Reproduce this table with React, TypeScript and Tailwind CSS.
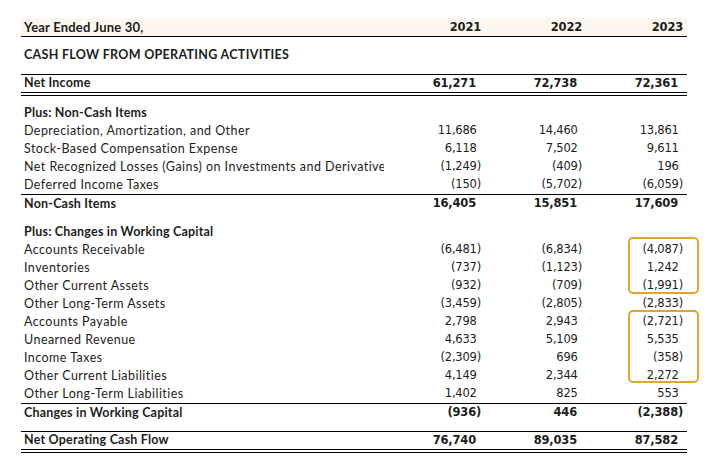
type Row = { label: string; values: number[]; kind: 'item' | 'total' | 'section' };

const nonCash: Row[] = [
  { label: 'Depreciation, Amortization, and Other', values: [11686, 14460, 13861], kind: 'item' },
  { label: 'Stock-Based Compensation Expense', values: [6118, 7502, 9611], kind: 'item' },
  { label: 'Net Recognized Losses (Gains) on Investments and Derivatives', values: [-1249, -409, 196], kind: 'item' },
  { label: 'Deferred Income Taxes', values: [-150, -5702, -6059], kind: 'item' },
];

const workingCapital: Row[] = [
  { label: 'Accounts Receivable', values: [-6481, -6834, -4087], kind: 'item' },
  { label: 'Inventories', values: [-737, -1123, 1242], kind: 'item' },
  { label: 'Other Current Assets', values: [-932, -709, -1991], kind: 'item' },
  { label: 'Other Long-Term Assets', values: [-3459, -2805, -2833], kind: 'item' },
  { label: 'Accounts Payable', values: [2798, 2943, -2721], kind: 'item' },
  { label: 'Unearned Revenue', values: [4633, 5109, 5535], kind: 'item' },
  { label: 'Income Taxes', values: [-2309, 696, -358], kind: 'item' },
  { label: 'Other Current Liabilities', values: [4149, 2344, 2272], kind: 'item' },
  { label: 'Other Long-Term Liabilities', values: [1402, 825, 553], kind: 'item' },
];

const grid = 'grid grid-cols-[1fr_97px_101px_101px] items-center';
const labelFont = "font-['Lato',sans-serif]";
const numFont = "font-['DejaVu_Sans',sans-serif] text-[11.5px] tracking-[-0.2px]";

function Num({ v, bold }: { v: number; bold?: boolean }) {
  const s = Math.abs(v).toLocaleString('en-US');
  return (
    <div className={`${numFont} text-right ${bold ? 'font-bold' : ''}`}>
      {v < 0 ? `(${s})` : s}
      {v >= 0 && <span className="invisible">)</span>}
    </div>
  );
}

function Line({ row, className = '' }: { row: Row; className?: string }) {
  const bold = row.kind === 'total';
  return (
    <div className={`${grid} h-[18px] ${className}`}>
      <div
        className={`${labelFont} pl-[3px] text-[12.5px] overflow-hidden whitespace-nowrap ${
          bold ? 'font-bold tracking-[0.2px]' : 'tracking-[0.45px]'
        }`}
      >
        {row.label}
      </div>
      {row.values.map((v, i) => (
        <Num key={i} v={v} bold={bold} />
      ))}
    </div>
  );
}

function Heading({ text, className = '' }: { text: string; className?: string }) {
  return (
    <div
      className={`${labelFont} h-[18px] flex items-center pl-[3px] text-[12.5px] font-bold tracking-[0.2px] ${className}`}
    >
      {text}
    </div>
  );
}

export default function App() {
  return (
    <div className="w-[708px] h-[459px] bg-white text-[#1c1c1c] pt-[18px] pl-[21px]">
      <div className="relative w-[666px] pr-[4px]">
        {/* header */}
        <div className={`${grid} h-[19px] bg-[#fdf6ee] border-b border-black -mr-[4px] pr-[4px]`}>
          <div className={`${labelFont} pl-[3px] text-[13px] font-bold tracking-[0.2px]`}>Year Ended June 30,</div>
          {['2021', '2022', '2023'].map((y) => (
            <div key={y} className={`${numFont} text-right font-bold`}>
              {y}
            </div>
          ))}
        </div>

        <div className="h-[38px] flex items-center border-b border-black -mr-[4px]">
          <span className={`${labelFont} pl-[3px] text-[12.5px] font-bold tracking-[0.3px]`}>
            CASH FLOW FROM OPERATING ACTIVITIES
          </span>
        </div>

        <Line
          row={{ label: 'Net Income', values: [61271, 72738, 72361], kind: 'total' }}
          className="h-[21px] border-b-4 border-double border-black -mr-[4px] pr-[4px]"
        />

        <Heading text="Plus: Non-Cash Items" className="mt-[8px]" />
        {nonCash.map((r) => (
          <Line key={r.label} row={r} />
        ))}
        <Line
          row={{ label: 'Non-Cash Items', values: [16405, 15851, 17609], kind: 'total' }}
          className="h-[19px] border-t border-black -mr-[4px] pr-[4px]"
        />

        <Heading text="Plus: Changes in Working Capital" className="mt-[10px]" />
        {workingCapital.map((r) => (
          <Line key={r.label} row={r} />
        ))}
        <Line
          row={{ label: 'Changes in Working Capital', values: [-936, 446, -2388], kind: 'total' }}
          className="h-[19px] border-t border-black -mr-[4px] pr-[4px]"
        />

        <Line
          row={{ label: 'Net Operating Cash Flow', values: [76740, 89035, 87582], kind: 'total' }}
          className="mt-[9px] h-[22px] border-t border-b-4 border-double border-black -mr-[4px] pr-[4px]"
        />

        {/* highlight boxes */}
        <div className="absolute left-[607px] top-[219px] w-[71px] h-[57px] rounded-[5px] border-2 border-[#e0a62c]" />
        <div className="absolute left-[607px] top-[292px] w-[71px] h-[73px] rounded-[5px] border-2 border-[#e0a62c]" />
      </div>
    </div>
  );
}
